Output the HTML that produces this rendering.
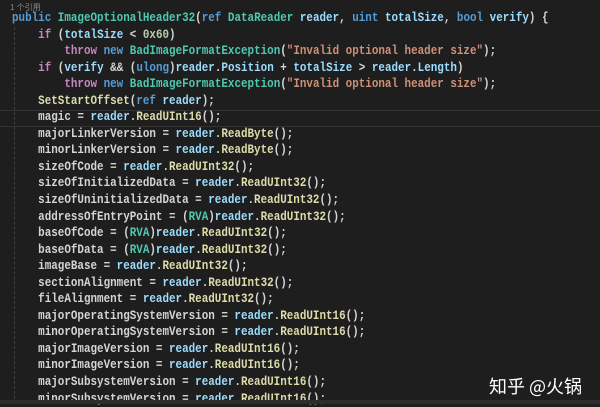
<!DOCTYPE html><html><head><meta charset="utf-8"><style>
body{margin:0;width:600px;height:404px;background:#1e1e1e;overflow:hidden;position:relative;font-family:"Liberation Mono",monospace;}
.ref{position:absolute;left:10px;top:2px;font-size:8px;color:#8a8a8a;font-family:"Liberation Sans","Noto Sans CJK SC",sans-serif;}
.code{position:absolute;left:12px;top:10px;font-size:12.5px;line-height:16.55px;color:#d4d4d4;font-weight:bold;white-space:pre;transform:scaleX(0.872);transform-origin:0 0;}
.k{color:#569cd6}.c{color:#c586c0}.t{color:#4ec9b0}.v{color:#9cdcfe}.m{color:#dcdcaa}.s{color:#ce9178}.n{color:#b5cea8}
.hl{position:absolute;left:0;top:110px;width:600px;height:15px;border-top:1px solid #333;border-bottom:1px solid #333;}
.guide{position:absolute;left:14px;top:27px;height:377px;border-left:1px dashed #404040;}
.wm{position:absolute;left:489px;top:373px;font-size:18px;color:#fff;font-family:"Noto Sans CJK SC",sans-serif;}
.bot{position:absolute;left:0;top:400px;width:600px;height:4px;background:#2d2d2d;}
</style></head><body>
<div class="hl"></div><div class="guide"></div>
<div class="ref">1 个引用</div>
<div class="code"><span class="k">public</span> <span class="t">ImageOptionalHeader32</span>(<span class="k">ref</span> <span class="t">DataReader</span> <span class="v">reader</span>, <span class="k">uint</span> <span class="v">totalSize</span>, <span class="k">bool</span> <span class="v">verify</span>) {
    <span class="c">if</span> (<span class="v">totalSize</span> &lt; <span class="n">0x60</span>)
        <span class="c">throw</span> <span class="k">new</span> <span class="t">BadImageFormatException</span>(<span class="s">"Invalid optional header size"</span>);
    <span class="c">if</span> (<span class="v">verify</span> &amp;&amp; (<span class="k">ulong</span>)<span class="v">reader</span>.<span class="v">Position</span> + <span class="v">totalSize</span> &gt; <span class="v">reader</span>.<span class="v">Length</span>)
        <span class="c">throw</span> <span class="k">new</span> <span class="t">BadImageFormatException</span>(<span class="s">"Invalid optional header size"</span>);
    <span class="m">SetStartOffset</span>(<span class="k">ref</span> <span class="v">reader</span>);
    magic = <span class="v">reader</span>.<span class="m">ReadUInt16</span>();
    majorLinkerVersion = <span class="v">reader</span>.<span class="m">ReadByte</span>();
    minorLinkerVersion = <span class="v">reader</span>.<span class="m">ReadByte</span>();
    sizeOfCode = <span class="v">reader</span>.<span class="m">ReadUInt32</span>();
    sizeOfInitializedData = <span class="v">reader</span>.<span class="m">ReadUInt32</span>();
    sizeOfUninitializedData = <span class="v">reader</span>.<span class="m">ReadUInt32</span>();
    addressOfEntryPoint = (<span class="t">RVA</span>)<span class="v">reader</span>.<span class="m">ReadUInt32</span>();
    baseOfCode = (<span class="t">RVA</span>)<span class="v">reader</span>.<span class="m">ReadUInt32</span>();
    baseOfData = (<span class="t">RVA</span>)<span class="v">reader</span>.<span class="m">ReadUInt32</span>();
    imageBase = <span class="v">reader</span>.<span class="m">ReadUInt32</span>();
    sectionAlignment = <span class="v">reader</span>.<span class="m">ReadUInt32</span>();
    fileAlignment = <span class="v">reader</span>.<span class="m">ReadUInt32</span>();
    majorOperatingSystemVersion = <span class="v">reader</span>.<span class="m">ReadUInt16</span>();
    minorOperatingSystemVersion = <span class="v">reader</span>.<span class="m">ReadUInt16</span>();
    majorImageVersion = <span class="v">reader</span>.<span class="m">ReadUInt16</span>();
    minorImageVersion = <span class="v">reader</span>.<span class="m">ReadUInt16</span>();
    majorSubsystemVersion = <span class="v">reader</span>.<span class="m">ReadUInt16</span>();
    minorSubsystemVersion = <span class="v">reader</span>.<span class="m">ReadUInt16</span>();</div>
<div class="wm">知乎 @火锅</div>
<div class="bot"></div>
</body></html>
